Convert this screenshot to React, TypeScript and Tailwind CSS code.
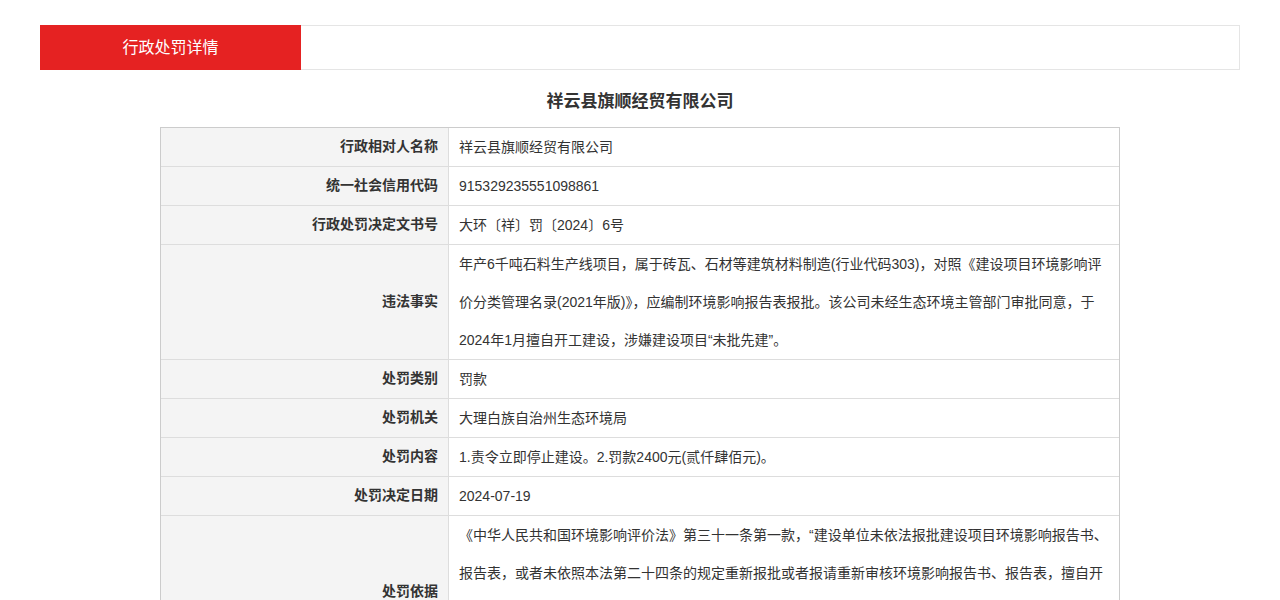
const rows: [string, string][] = [
  ["行政相对人名称", "祥云县旗顺经贸有限公司"],
  ["统一社会信用代码", "915329235551098861"],
  ["行政处罚决定文书号", "大环〔祥〕罚〔2024〕6号"],
  [
    "违法事实",
    "年产6千吨石料生产线项目，属于砖瓦、石材等建筑材料制造(行业代码303)，对照《建设项目环境影响评价分类管理名录(2021年版)》，应编制环境影响报告表报批。该公司未经生态环境主管部门审批同意，于2024年1月擅自开工建设，涉嫌建设项目“未批先建”。",
  ],
  ["处罚类别", "罚款"],
  ["处罚机关", "大理白族自治州生态环境局"],
  ["处罚内容", "1.责令立即停止建设。2.罚款2400元(贰仟肆佰元)。"],
  ["处罚决定日期", "2024-07-19"],
  [
    "处罚依据",
    "《中华人民共和国环境影响评价法》第三十一条第一款，“建设单位未依法报批建设项目环境影响报告书、报告表，或者未依照本法第二十四条的规定重新报批或者报请重新审核环境影响报告书、报告表，擅自开工建设的，由生态环境主管部门责令停止建设，根据违法情节和危害后果，处建设项目总投资额百分之一以上百分之五以下的罚款，并可以责令恢复原状。”",
  ],
];

export default function App() {
  return (
    <div className="min-h-[600px] bg-white text-[14px] text-[#333] pt-[25px]" style={{ fontFamily: '"Liberation Sans", "Noto Sans CJK SC", sans-serif' }}>
      <div className="mx-[40px] h-[45px] border border-[#e5e5e5] flex">
        <div className="w-[261px] bg-[#e52222] text-white text-[16px] flex items-center justify-center -m-px h-[45px]">行政处罚详情</div>
      </div>
      <h1 className="text-center font-bold text-[17px] text-[#333] mt-[19px] mb-[12px]">祥云县旗顺经贸有限公司</h1>
      <div className="mx-auto w-[960px] border border-[#ccc] border-b-0">
        {rows.map(([k, v]) => (
          <div key={k} className="flex border-b border-[#ddd]">
            <div className="w-[288px] shrink-0 bg-[#f4f4f4] border-r border-[#ddd] flex items-center justify-end pr-[10px] font-bold text-[#333]">{k}</div>
            <div className="flex-1 px-[10px] py-0 leading-[38px] min-h-[38px]">{v}</div>
          </div>
        ))}
      </div>
    </div>
  );
}
